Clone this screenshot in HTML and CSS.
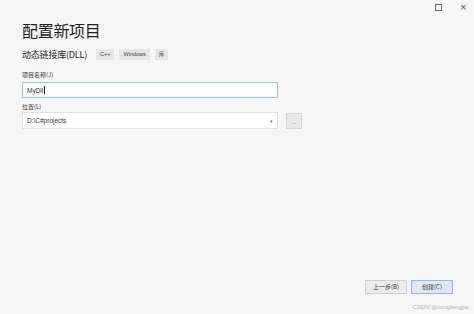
FILE: index.html
```html
<!DOCTYPE html>
<html lang="zh">
<head>
<meta charset="utf-8">
<title>配置新项目</title>
<link rel="stylesheet" href="styles.css">
</head>
<body>
<div class="window">
  <div class="titlebar">
    <span class="ctl max"></span>
    <span class="ctl close">×</span>
  </div>
  <main class="content">
    <h1 class="title">配置新项目</h1>
    <div class="subtitle-row">
      <span class="subtitle">动态链接库(DLL)</span>
      <span class="tag">C++</span>
      <span class="tag">Windows</span>
      <span class="tag">库</span>
    </div>
    <label class="field-label">项目名称(J)</label>
    <div class="input focused"><span class="value">MyDll</span><span class="caret"></span></div>
    <label class="field-label second">位置(L)</label>
    <div class="location-row">
      <div class="input select"><span class="value">D:\C#projects</span><span class="arrow">▾</span></div>
      <div class="browse">...</div>
    </div>
  </main>
  <div class="footer">
    <button class="btn">上一步(B)</button>
    <button class="btn primary">创建(C)</button>
  </div>
  <div class="watermark">CSDN @congfengjia</div>
</div>
</body>
</html>
```

FILE: styles.css
```css
html, body {
  margin: 0;
  padding: 0;
  height: 100%;
}
body {
  background: #f6f6f6;
  font-family: "Noto Sans CJK SC", "Noto Sans", sans-serif;
  color: #1e1e1e;
}
.window {
  height: 314px;
  display: flex;
  flex-direction: column;
}
.titlebar {
  height: 14px;
  display: flex;
  justify-content: flex-end;
  align-items: center;
  padding-right: 7px;
  gap: 17px;
}
.ctl.max {
  width: 5px;
  height: 5px;
  border: 1px solid #666;
}
.ctl.close {
  font-size: 9px;
  line-height: 10px;
  color: #555;
  font-family: "DejaVu Sans", sans-serif;
}
.content {
  padding-left: 22px;
  display: flex;
  flex-direction: column;
}
.title {
  margin: 6px 0 0 0;
  font-size: 16px;
  line-height: 20px;
  font-weight: 400;
  color: #1e1e1e;
  letter-spacing: -0.3px;
}
.subtitle-row {
  margin-top: 9px;
  display: flex;
  align-items: center;
  height: 11px;
}
.subtitle {
  font-size: 9px;
  line-height: 11px;
  color: #1e1e1e;
  margin-right: 9px;
  letter-spacing: -0.2px;
}
.tag {
  background: #e6e6e6;
  font-size: 5.5px;
  line-height: 11px;
  height: 11px;
  padding: 0 4px;
  color: #444;
  margin-right: 5px;
  font-family: "Liberation Sans", "Noto Sans CJK SC", sans-serif;
}
.field-label {
  display: block;
  font-size: 6px;
  line-height: 8px;
  margin-top: 11px;
  color: #333;
}
.field-label.second {
  margin-top: 5px;
}
.input {
  box-sizing: border-box;
  width: 256px;
  height: 16px;
  margin-top: 3px;
  background: #fff;
  border: 1px solid #d6d6d6;
  display: flex;
  align-items: center;
  padding-left: 4px;
  font-size: 6.5px;
  font-family: "Liberation Sans", sans-serif;
  color: #333;
}
.input.focused {
  border-color: #9cc1de;
}
.caret {
  display: inline-block;
  width: 1px;
  height: 8px;
  background: #111;
  margin-left: 0.5px;
}
.location-row {
  display: flex;
  align-items: flex-start;
  margin-top: 1px;
}
.location-row .input {
  margin-top: 0;
  height: 17px;
  border-color: #e2e2e2;
}
.select {
  justify-content: space-between;
  padding-right: 4px;
}
.arrow {
  font-size: 5px;
  color: #777;
}
.browse {
  box-sizing: border-box;
  width: 16px;
  height: 16px;
  margin-top: 1px;
  margin-left: 8px;
  background: #e8e8e8;
  border: 1px solid #d6d6d6;
  font-size: 5px;
  line-height: 16px;
  text-align: center;
  color: #555;
  font-family: "Liberation Sans", sans-serif;
}
.footer {
  margin-top: auto;
  display: flex;
  justify-content: flex-end;
  gap: 4px;
  padding-right: 21px;
}
.btn {
  box-sizing: border-box;
  width: 42px;
  height: 14px;
  padding: 0;
  border: 1px solid #cfcfcf;
  background: #ececec;
  font-family: "Noto Sans CJK SC", sans-serif;
  font-size: 6px;
  line-height: 12px;
  color: #333;
}
.btn.primary {
  background: #dde8f4;
  border-color: #94b8d8;
}
.watermark {
  margin-top: 10px;
  margin-bottom: 3px;
  text-align: right;
  padding-right: 6px;
  font-size: 6px;
  line-height: 7px;
  color: #b5b5b5;
  font-family: "Liberation Sans", sans-serif;
}
```
